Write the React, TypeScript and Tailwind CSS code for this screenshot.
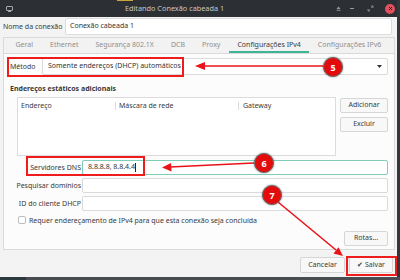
import React from "react";

function Btn({ children, className = "" }: { children: React.ReactNode; className?: string }) {
  return (
    <div
      className={
        "flex items-center justify-center rounded-[2px] border border-[#d6d6d6] bg-[#f8f8f8] text-[7px] text-[#3a3a3a] " +
        className
      }
    >
      {children}
    </div>
  );
}

function Field({ label, children }: { label: string; children?: React.ReactNode }) {
  return (
    <div className="flex h-[15px] items-center pr-[6px]">
      <div className="w-[77px] shrink-0 text-right text-[7px] leading-none text-[#3a3a3a]">{label}</div>
      <div className="ml-[1px] flex h-[15px] flex-1 items-center rounded-[2px] border border-[#dadada] bg-white pl-[5px] text-[7px] text-[#333]">
        {children}
      </div>
    </div>
  );
}

export default function App() {
  const tabs = ["Geral", "Ethernet", "Segurança 802.1X", "DCB", "Proxy", "Configurações IPv4", "Configurações IPv6"];
  return (
    <div className="relative h-[280px] w-[400px] overflow-hidden bg-[#33363b] font-['Noto_Sans',sans-serif]">
      <div className="flex h-[277px] w-[397px] flex-col bg-[#f3f3f3]">
        {/* title bar */}
        <div className="relative flex h-[17px] shrink-0 items-center bg-[#2c2f34]">
          <div className="absolute left-[117px] top-0 h-[1px] w-[16px] bg-[#c9a53c]" />
          <div className="ml-[5px] flex w-[8px] flex-col items-center">
            <div className="h-[5px] w-[7px] rounded-[1px] border border-[#a8a8a8]" />
            <div className="h-[1px] w-[3px] bg-[#a8a8a8]" />
          </div>
          <div className="flex-1 text-center text-[7.3px] leading-none text-[#c8c8c8]">Editando Conexão cabeada 1</div>
          <div className="mr-[2px] flex items-center gap-[9px]">
            <svg width="5" height="5" viewBox="0 0 5 5">
              <path d="M0.5 3 L2.5 0.5 L4.5 3 Z" fill="#9a9a9a" />
              <rect x="0.5" y="3.8" width="4" height="0.9" fill="#9a9a9a" />
            </svg>
            <div className="h-[1px] w-[4px] bg-[#9a9a9a]" />
            <svg width="7" height="7" viewBox="0 0 7 7" className="ml-[4px]">
              <path d="M4 1 L6 1 L6 3 M6 1 L4.2 2.8 M3 6 L1 6 L1 4 M1 6 L2.8 4.2" stroke="#9a9a9a" strokeWidth="0.8" fill="none" />
            </svg>
            <div className="ml-[2px] flex h-[10px] w-[10px] items-center justify-center rounded-full bg-[#e0515f]">
              <svg width="5" height="5" viewBox="0 0 5 5">
                <path d="M1 1 L4 4 M4 1 L1 4" stroke="#3a1b1f" strokeWidth="1" />
              </svg>
            </div>
          </div>
        </div>

        {/* name row */}
        <div className="mt-[1px] flex h-[17px] shrink-0 items-center">
          <div className="w-[65px] pl-[3px] text-[7px] leading-none text-[#3a3a3a]">Nome da conexão</div>
          <div className="flex h-[17px] w-[327px] items-center rounded-[2px] border border-[#dcdcdc] bg-white pl-[4px] text-[7px] text-[#333]">
            Conexão cabeada 1
          </div>
        </div>

        {/* notebook */}
        <div className="ml-[3px] mt-[2px] flex h-[213px] w-[392px] flex-col border border-[#dadada]">
          <div className="flex h-[15px] shrink-0 items-stretch bg-[#f2f2f2] pl-[3px]">
            {tabs.map((t, i) => (
              <div
                key={t}
                className={
                  "flex items-center border-b-2 px-[8.5px] text-[7px] leading-none " +
                  (i === 5 ? "border-[#3fb495] text-[#3a3a3a]" : "border-transparent text-[#8f8f8f]")
                }
              >
                {t}
              </div>
            ))}
          </div>
          <div className="flex flex-1 flex-col border-t border-[#dadada] bg-[#fcfcfc]">
            {/* method */}
            <div className="mt-[4px] flex h-[17px] items-center pl-[6px] pr-[6px]">
              <div className="w-[32px] text-[7px] leading-none text-[#3a3a3a]">Método</div>
              <div className="flex h-[17px] flex-1 items-center justify-between rounded-[2px] border border-[#dadada] bg-white pl-[5px] pr-[5px] text-[7px] text-[#333]">
                <span>Somente endereços (DHCP) automáticos</span>
                <svg width="5" height="3" viewBox="0 0 5 3">
                  <path d="M0 0 L5 0 L2.5 3 Z" fill="#333" />
                </svg>
              </div>
            </div>
            <div className="ml-[6px] mt-[9px] h-[10px] text-[7px] font-bold leading-[10px] text-[#3a3a3a]">
              Endereços estáticos adicionais
            </div>
            {/* table + buttons */}
            <div className="mt-[3px] flex gap-[4px] pl-[13px] pr-[6px]">
              <div className="flex h-[59px] flex-1 flex-col border border-[#dcdcdc] bg-white">
                <div className="flex h-[15px] items-center text-[7px] leading-none text-[#3a3a3a]">
                  <div className="flex h-[8px] w-[97px] items-center pl-[3px]">Endereço</div>
                  <div className="flex h-[8px] w-[123px] items-center border-l border-[#dcdcdc] pl-[3px]">Máscara de rede</div>
                  <div className="flex h-[8px] flex-1 items-center border-l border-[#dcdcdc] pl-[4px]">Gateway</div>
                </div>
              </div>
              <div className="flex w-[48px] flex-col gap-[4px] pt-[1px]">
                <Btn className="h-[15px]">Adicionar</Btn>
                <Btn className="h-[15px]">Excluir</Btn>
              </div>
            </div>
            {/* fields */}
            <div className="mt-[4px] flex flex-col gap-[3px]">
              <div className="flex h-[15px] items-center pr-[6px]">
                <div className="w-[77px] shrink-0 text-right text-[7px] leading-none text-[#3a3a3a]">Servidores DNS</div>
                <div className="ml-[1px] flex h-[15px] flex-1 items-center rounded-[2px] border border-[#7fcdb8] bg-white pl-[5px] text-[7px] text-[#333]">
                  8.8.8.8, 8.8.4.4
                  <span className="ml-[0.5px] h-[9px] w-[0.8px] bg-[#222]" />
                </div>
              </div>
              <Field label="Pesquisar domínios" />
              <Field label="ID do cliente DHCP" />
            </div>
            <div className="mt-[4px] flex h-[10px] items-center pl-[14px]">
              <div className="h-[8px] w-[8px] rounded-[2px] border border-[#bdbdbd] bg-white" />
              <div className="ml-[3px] text-[7px] leading-none text-[#3a3a3a]">
                Requer endereçamento de IPv4 para que esta conexão seja concluída
              </div>
            </div>
            <div className="mt-[6px] flex justify-end pr-[6px]">
              <Btn className="h-[15px] w-[44px]">Rotas...</Btn>
            </div>
          </div>
        </div>

        {/* bottom buttons */}
        <div className="mt-[7px] flex justify-end gap-[4px] pr-[4px]">
          <Btn className="h-[16px] w-[45px]">Cancelar</Btn>
          <Btn className="h-[16px] w-[44px]">
            <span className="mr-[2px] text-[7px]">✔</span>Salvar
          </Btn>
        </div>
      </div>
      <div className="flex h-[3px] w-[400px]">
        <div className="w-[26px] bg-[#2b3b3d]" />
        <div className="flex-1 bg-[#484b50]" />
      </div>

      {/* annotations */}
      <div className="absolute left-[7px] top-[57px] h-[20px] w-[177px] border-2 border-[#ee1c1c]" />
      <div className="absolute left-[26px] top-[156px] h-[20px] w-[119px] border-2 border-[#ee1c1c]" />
      <div className="absolute left-[346px] top-[256px] h-[20px] w-[51px] border-2 border-[#ee1c1c]" />
      <svg className="absolute left-0 top-0" width="400" height="280" viewBox="0 0 400 280">
        <line x1="324" y1="66" x2="203" y2="66" stroke="#e8141a" strokeWidth="1.6" />
        <polygon points="195,66 205,62 205,70" fill="#e8141a" />
        <line x1="254" y1="163" x2="170" y2="167" stroke="#e8141a" strokeWidth="1.6" />
        <polygon points="162,167.5 171,163 171.5,171.5" fill="#e8141a" />
        <line x1="278" y1="202" x2="336" y2="250" stroke="#e8141a" strokeWidth="1.6" />
        <polygon points="343,256 333.5,253.4 338.5,247.2" fill="#e8141a" />
      </svg>
      {[
        { n: "5", c: "left-[323px] top-[57px]" },
        { n: "6", c: "left-[254px] top-[153px]" },
        { n: "7", c: "left-[262px] top-[185px]" },
      ].map((b) => (
        <div
          key={b.n}
          className={
            "absolute flex h-[20px] w-[20px] items-center justify-center rounded-full border-[1.5px] border-[#6b6b6b] bg-[#e30b0b] text-[9px] font-bold leading-none text-white shadow-[0_0_2px_rgba(0,0,0,0.5)] " +
            b.c
          }
        >
          {b.n}
        </div>
      ))}
    </div>
  );
}
